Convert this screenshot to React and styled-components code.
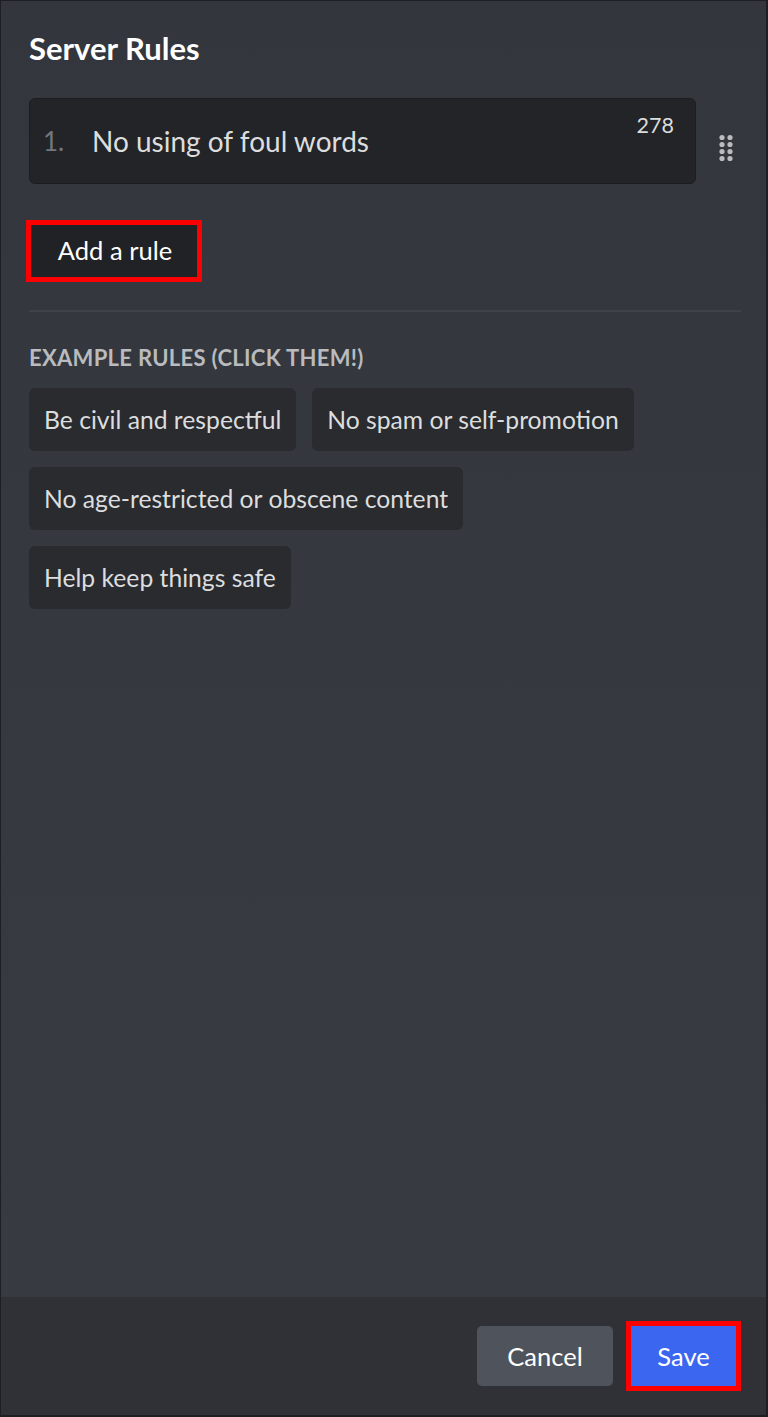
import React from "react";
import styled, { createGlobalStyle } from "styled-components";

const GlobalStyle = createGlobalStyle`
  html, body {
    margin: 0;
    padding: 0;
    background: #1e1f22;
  }
  * {
    box-sizing: border-box;
  }
`;

const EXAMPLES = [
  "Be civil and respectful",
  "No spam or self-promotion",
  "No age-restricted or obscene content",
  "Help keep things safe",
];

const App = () => {
  return (
    <>
      <GlobalStyle />
      <Frame>
        <Body>
          <Title>Server Rules</Title>
          <RuleRow>
            <RuleBox>
              <RuleNumber>1.</RuleNumber>
              <RuleText>No using of foul words</RuleText>
              <Counter>278</Counter>
            </RuleBox>
            <Handle viewBox="0 0 14 28" width="14" height="28">
              {[0, 1, 2, 3].map(row =>
                [0, 1].map(col => (
                  <circle
                    key={`dot-${row}-${col}`}
                    cx={3 + col * 8}
                    cy={3.5 + row * 7}
                    r="2.6"
                    fill="#b9bbbe"
                  />
                ))
              )}
            </Handle>
          </RuleRow>
          <AddButton>Add a rule</AddButton>
          <Divider />
          <SectionLabel>Example Rules (Click them!)</SectionLabel>
          <ChipList>
            {EXAMPLES.map(text => (
              <Chip key={text}>{text}</Chip>
            ))}
          </ChipList>
        </Body>
        <Footer>
          <CancelButton>Cancel</CancelButton>
          <SaveButton>Save</SaveButton>
        </Footer>
      </Frame>
    </>
  );
};

const Frame = styled.div`
  width: 768px;
  height: 1417px;
  display: flex;
  flex-direction: column;
  border-style: solid;
  border-color: #1e1f22;
  border-width: 1px 2px 2px 1px;
  background: linear-gradient(180deg, #33363c 0%, #383b41 100%);
  font-family: Lato, "Liberation Sans", sans-serif;
  overflow: hidden;
`;

const Body = styled.div`
  flex: 1;
  display: flex;
  flex-direction: column;
  padding: 0 25px 0 28px;
`;

const Title = styled.h1`
  margin: 29px 0 0;
  font-size: 31px;
  line-height: 36px;
  font-weight: 700;
  color: #ffffff;
`;

const RuleRow = styled.div`
  display: flex;
  align-items: center;
  gap: 23px;
  margin-top: 32px;
`;

const RuleBox = styled.div`
  position: relative;
  width: 667px;
  height: 86px;
  display: flex;
  align-items: center;
  padding: 0 13px;
  background: #232428;
  border: 1px solid #1c1d20;
  border-radius: 6px;
`;

const RuleNumber = styled.span`
  width: 49px;
  font-size: 26px;
  color: #72767d;
`;

const RuleText = styled.span`
  font-size: 28px;
  color: #dcddde;
`;

const Counter = styled.span`
  position: absolute;
  top: 13px;
  right: 21px;
  font-size: 21.5px;
  color: #dcddde;
`;

const Handle = styled.svg`
  display: block;
  margin-top: 14px;
`;

const AddButton = styled.button`
  align-self: flex-start;
  margin: 36px 0 0 -3px;
  width: 176px;
  height: 62px;
  border: 5px solid #ff0000;
  background: #202225;
  color: #ffffff;
  font-family: inherit;
  font-size: 25.5px;
  padding: 0 0 2px 2px;
`;

const Divider = styled.hr`
  margin: 28px 0 0;
  border: none;
  height: 2px;
  background: #3f4248;
`;

const SectionLabel = styled.div`
  margin-top: 33px;
  font-size: 22px;
  line-height: 26px;
  font-weight: 700;
  letter-spacing: 0.3px;
  text-transform: uppercase;
  color: #b9bbbe;
`;

const ChipList = styled.div`
  display: flex;
  flex-wrap: wrap;
  gap: 16px;
  margin-top: 17px;
  max-width: 660px;
`;

const Chip = styled.button`
  height: 63px;
  padding: 0 15px;
  border: none;
  border-radius: 6px;
  background: #292b2f;
  color: #dcddde;
  font-family: inherit;
  font-size: 24.7px;
`;

const Footer = styled.div`
  height: 118px;
  display: flex;
  align-items: center;
  justify-content: flex-end;
  gap: 13px;
  padding: 0 25px 0 0;
  background: #2f3136;
`;

const CancelButton = styled.button`
  width: 136px;
  height: 60px;
  border: none;
  border-radius: 5px;
  background: #4f545c;
  color: #ffffff;
  font-family: inherit;
  font-size: 25.5px;
`;

const SaveButton = styled.button`
  width: 115px;
  height: 70px;
  border: 5px solid #ff0000;
  background: #3b66ef;
  color: #ffffff;
  font-family: inherit;
  font-size: 25.5px;
`;

export default App;
